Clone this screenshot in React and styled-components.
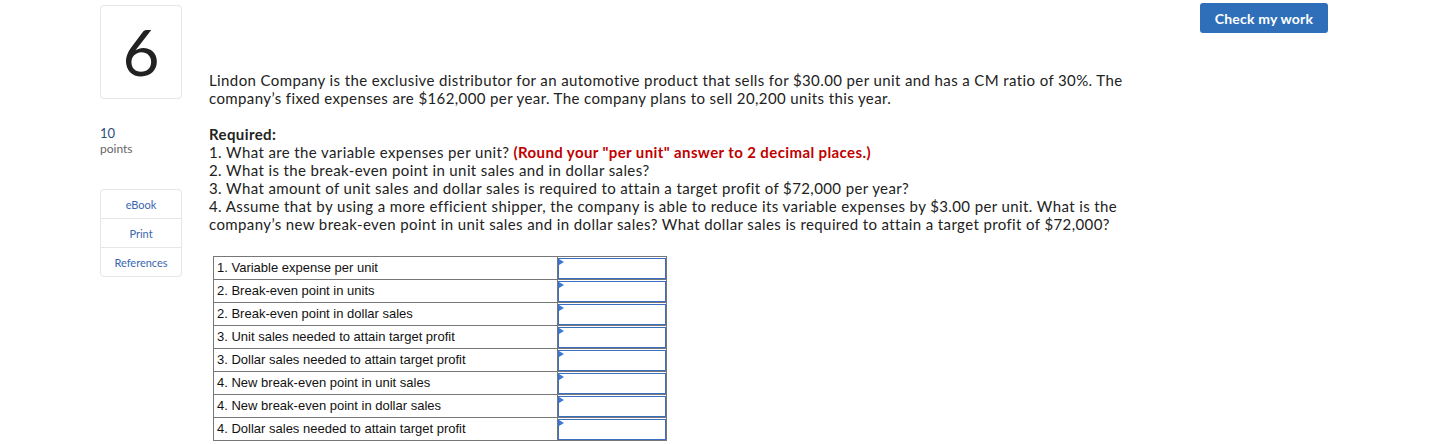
import React from "react";
import styled, { createGlobalStyle } from "styled-components";

const Global = createGlobalStyle`
  html, body { margin: 0; padding: 0; background: #fff; }
  body { font-family: Lato, "Open Sans", sans-serif; color: #222; }
`;

const Page = styled.div`
  display: flex;
  align-items: flex-start;
  width: 1439px;
  height: 444px;
  overflow: hidden;
`;

const Sidebar = styled.div`
  display: flex;
  flex-direction: column;
  width: 82px;
  margin-left: 100px;
  margin-top: 5px;
`;

const NumberCard = styled.div`
  height: 94px;
  border: 1px solid #e6e6e6;
  border-radius: 4px;
  box-sizing: border-box;
  display: flex;
  align-items: center;
  justify-content: center;
  font-family: Lato, sans-serif;
  font-size: 64px;
  font-weight: 400;
  color: #222;
  line-height: 1;
`;

const Points = styled.div`
  margin-top: 27px;
  font-family: Lato, sans-serif;
  font-size: 12px;
  line-height: 15px;
`;

const PointsValue = styled.div`
  color: #2b4f7e;
  font-size: 13px;
`;

const PointsLabel = styled.div`
  color: #666;
`;

const Tools = styled.div`
  margin-top: 33px;
  border: 1px solid #e6e6e6;
  border-radius: 4px;
  display: flex;
  flex-direction: column;
`;

const ToolLink = styled.div`
  height: 28px;
  display: flex;
  align-items: center;
  justify-content: center;
  font-family: Lato, sans-serif;
  font-size: 11px;
  color: #3a67b0;
  border-top: ${(p) => (p.$first ? "none" : "1px solid #e6e6e6")};
`;

const Main = styled.div`
  margin-left: 27px;
  padding-top: 71px;
  width: 960px;
  font-family: Lato, sans-serif;
  font-size: 15px;
  letter-spacing: 0.39px;
  line-height: 18px;
  color: #222;
`;

const Para = styled.p`
  margin: 0 0 18px 0;
`;

const Strong = styled.span`
  font-weight: 700;
  color: ${(p) => p.$color || "#222"};
`;

const Table = styled.table`
  margin-left: 4px;
  margin-top: 23px;
  border-collapse: collapse;
  font-family: "Liberation Sans", Arial, sans-serif;
  font-size: 13px;
  letter-spacing: 0;
  color: #111;
`;

const LabelCell = styled.td`
  border: 1px solid #777;
  width: 344px;
  height: 23px;
  padding: 0 0 0 3px;
  box-sizing: border-box;
  vertical-align: middle;
`;

const InputCell = styled.td`
  border: 1px solid #777;
  width: 109px;
  height: 23px;
  padding: 0;
  box-sizing: border-box;
`;

const InputBox = styled.div`
  position: relative;
  height: 21px;
  border: 1.5px solid #3b6fbf;
  box-sizing: border-box;
  background: #fff;
`;

const Marker = styled.span`
  position: absolute;
  left: 0;
  top: 0;
  width: 0;
  height: 0;
  border-top: 3px solid transparent;
  border-bottom: 3px solid transparent;
  border-left: 5px solid #3b78d8;
`;

const Spacer = styled.div`
  flex: 1;
`;

const CheckButton = styled.button`
  margin-top: 3px;
  margin-right: 111px;
  width: 128px;
  height: 30px;
  padding: 0;
  background: #2f6fba;
  color: #fff;
  border: none;
  border-radius: 3px;
  font-family: Lato, sans-serif;
  font-weight: 700;
  font-size: 14px;
  letter-spacing: 0.2px;
  cursor: pointer;
`;

const rows = [
  "1. Variable expense per unit",
  "2. Break-even point in units",
  "2. Break-even point in dollar sales",
  "3. Unit sales needed to attain target profit",
  "3. Dollar sales needed to attain target profit",
  "4. New break-even point in unit sales",
  "4. New break-even point in dollar sales",
  "4. Dollar sales needed to attain target profit",
];

export default function App() {
  return (
    <>
      <Global />
      <Page>
        <Sidebar>
          <NumberCard>6</NumberCard>
          <Points>
            <PointsValue>10</PointsValue>
            <PointsLabel>points</PointsLabel>
          </Points>
          <Tools>
            <ToolLink $first>eBook</ToolLink>
            <ToolLink>Print</ToolLink>
            <ToolLink>References</ToolLink>
          </Tools>
        </Sidebar>
        <Main>
          <Para>
            Lindon Company is the exclusive distributor for an automotive product that sells for $30.00 per unit and has a CM ratio of 30%. The
            <br />
            company’s fixed expenses are $162,000 per year. The company plans to sell 20,200 units this year.
          </Para>
          <Para>
            <Strong>Required:</Strong>
            <br />
            1. What are the variable expenses per unit?{" "}
            <Strong $color="#c00000">(Round your "per unit" answer to 2 decimal places.)</Strong>
            <br />
            2. What is the break-even point in unit sales and in dollar sales?
            <br />
            3. What amount of unit sales and dollar sales is required to attain a target profit of $72,000 per year?
            <br />
            4. Assume that by using a more efficient shipper, the company is able to reduce its variable expenses by $3.00 per unit. What is the
            <br />
            company’s new break-even point in unit sales and in dollar sales? What dollar sales is required to attain a target profit of $72,000?
          </Para>
          <Table>
            <tbody>
              {rows.map((r) => (
                <tr key={r}>
                  <LabelCell>{r}</LabelCell>
                  <InputCell>
                    <InputBox>
                      <Marker />
                    </InputBox>
                  </InputCell>
                </tr>
              ))}
            </tbody>
          </Table>
        </Main>
        <Spacer />
        <CheckButton>Check my work</CheckButton>
      </Page>
    </>
  );
}
